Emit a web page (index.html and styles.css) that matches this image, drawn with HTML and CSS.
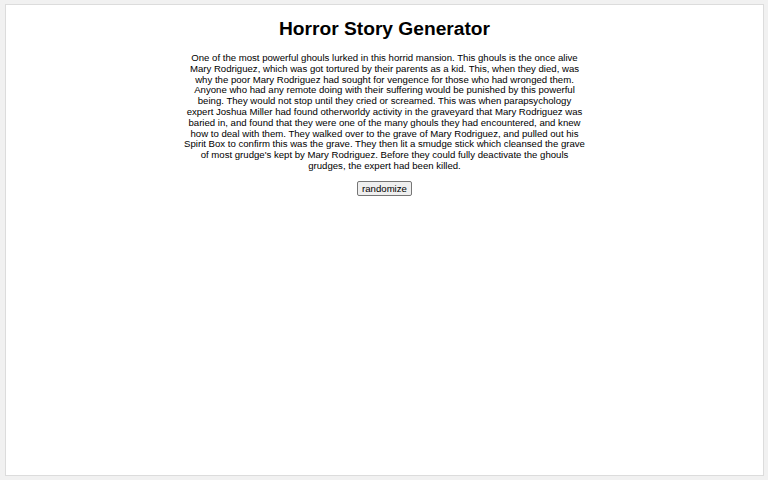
FILE: index.html
```
<!DOCTYPE html>
<html lang="en">
<head>
    <meta charset="UTF-8">
    <meta name="viewport" content="width=device-width, initial-scale=1.0">
    <title>Horror Story Generator</title>
    <link rel="stylesheet" href="styles.css">
</head>
<body>
    <div class="sheet">
        <h1>Horror Story Generator</h1>
        <p class="story" id="story">One of the most powerful ghouls lurked in this horrid mansion. This ghouls is the once alive Mary Rodriguez, which was got tortured by their parents as a kid. This, when they died, was why the poor Mary Rodriguez had sought for vengence for those who had wronged them. Anyone who had any remote doing with their suffering would be punished by this powerful being. They would not stop until they cried or screamed. This was when parapsychology expert Joshua Miller had found otherworldy activity in the graveyard that Mary Rodriguez was baried in, and found that they were one of the many ghouls they had encountered, and knew how to deal with them. They walked over to the grave of Mary Rodriguez, and pulled out his Spirit Box to confirm this was the grave. They then lit a smudge stick which cleansed the grave of most grudge's kept by Mary Rodriguez. Before they could fully deactivate the ghouls grudges, the expert had been killed.</p>
        <button class="randomize" type="button">randomize</button>
    </div>
</body>
</html>
```

FILE: styles.css
```
html, body {
    height: 100%;
}
body {
    margin: 0;
    background: #f1f1f1;
    font-family: "Liberation Sans", Arial, sans-serif;
    color: #000;
    padding: 4px 4px 4px 5px;
    box-sizing: border-box;
}
.sheet {
    background: #fff;
    border: 1px solid #dcdcdc;
    height: 100%;
    box-sizing: border-box;
    display: flex;
    flex-direction: column;
    align-items: center;
}
h1 {
    font-size: 19.2px;
    margin: 13px 0 0;
}
.story {
    width: 402px;
    font-size: 9.6px;
    line-height: 10.8px;
    text-align: center;
    margin: 13px 0 0;
}
.randomize {
    margin-top: 9px;
    font-family: "Liberation Sans", Arial, sans-serif;
    font-size: 9.6px;
    padding: 1px 4px;
    background: #efefef;
    border: 1px solid #767676;
    border-radius: 2px;
    color: #000;
}
```
